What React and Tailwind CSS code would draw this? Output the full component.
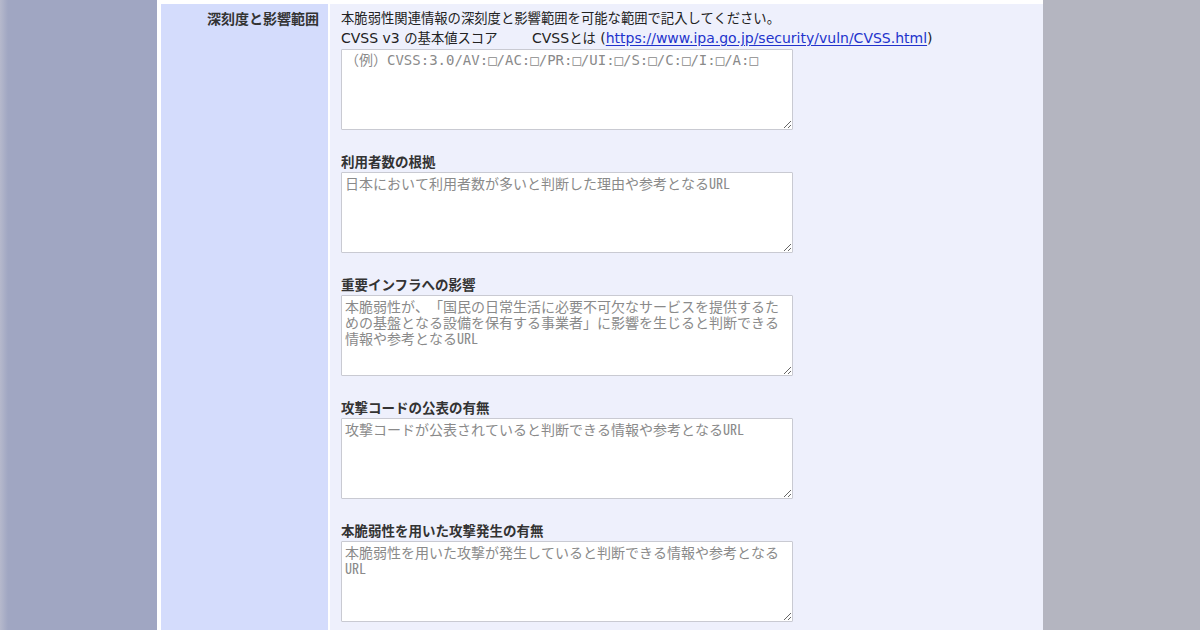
export default function App() {
  const jp = { fontFamily: '"Noto Sans CJK JP", "Noto Sans", sans-serif' };
  const lat = { fontFamily: '"DejaVu Sans", "Noto Sans CJK JP", sans-serif' };
  const items = [
    {
      label: "利用者数の根拠",
      ph: "日本において利用者数が多いと判断した理由や参考となるURL",
    },
    {
      label: "重要インフラへの影響",
      ph: "本脆弱性が、「国民の日常生活に必要不可欠なサービスを提供するための基盤となる設備を保有する事業者」に影響を生じると判断できる情報や参考となるURL",
    },
    {
      label: "攻撃コードの公表の有無",
      ph: "攻撃コードが公表されていると判断できる情報や参考となるURL",
    },
    {
      label: "本脆弱性を用いた攻撃発生の有無",
      ph: "本脆弱性を用いた攻撃が発生していると判断できる情報や参考となるURL",
    },
  ];
  const taClass =
    "block w-[452px] h-[81px] bg-white border border-[#c9cad2] rounded-[1px] px-[3px] pt-[2px] text-[14px] leading-[16px] text-[#333] placeholder:text-[#8a8a8a] outline-none [text-spacing-trim:space-all]";
  return (
    <div
      className="flex h-[630px] w-[1200px] overflow-hidden [text-spacing-trim:space-all]"
      style={jp}
    >
      <div className="flex w-[157px] bg-[#a0a6c2]">
        <div className="w-[8px] bg-gradient-to-r from-[#b6b9cc] to-[#a0a6c2]" />
      </div>
      <div className="flex w-[886px] bg-white pt-[4px] pl-[4px] gap-[2px]">
        <div className="w-[167px] bg-[#d4dcfc] pt-[4px] pr-[9px] text-right">
          <div className="text-[14px] leading-[20px] font-bold text-[#333]">
            深刻度と影響範囲
          </div>
        </div>
        <div className="flex-1 bg-[#eef0fc] pt-[4px] pl-[11px] text-[13.33px] text-[#222]">
          <div className="leading-[20px]">
            本脆弱性関連情報の深刻度と影響範囲を可能な範囲で記入してください。
          </div>
          <div className="h-[20px] leading-[20px] flex items-baseline">
            <span className="w-[191px] whitespace-nowrap">
              <span className="text-[14px]" style={lat}>
                CVSS v3{" "}
              </span>
              の基本値スコア
            </span>
            <span className="whitespace-nowrap">
              <span className="text-[14px]" style={lat}>
                CVSS
              </span>
              とは
              <span className="text-[14px]" style={lat}>
                {" "}(
                <a href="#" className="text-[#2233cc] underline underline-offset-2">
                  https://www.ipa.go.jp/security/vuln/CVSS.html
                </a>
                )
              </span>
            </span>
          </div>
          <textarea
            className={taClass + " mt-[1px]"}
            style={{ fontFamily: '"DejaVu Sans Mono", "Noto Sans CJK JP", monospace' }}
            placeholder="（例）CVSS:3.0/AV:□/AC:□/PR:□/UI:□/S:□/C:□/I:□/A:□"
          />
          {items.map((it) => (
            <div key={it.label}>
              <div className="mt-[21px] leading-[20px] text-[13.5px] font-bold text-[#333]">
                {it.label}
              </div>
              <textarea
                className={taClass + " mt-[1px]"}
                style={{ fontFamily: '"Noto Sans Mono CJK JP", "Noto Sans CJK JP", monospace' }}
                placeholder={it.ph}
              />
            </div>
          ))}
        </div>
      </div>
      <div className="flex-1 bg-[#b4b5c0]" />
    </div>
  );
}
